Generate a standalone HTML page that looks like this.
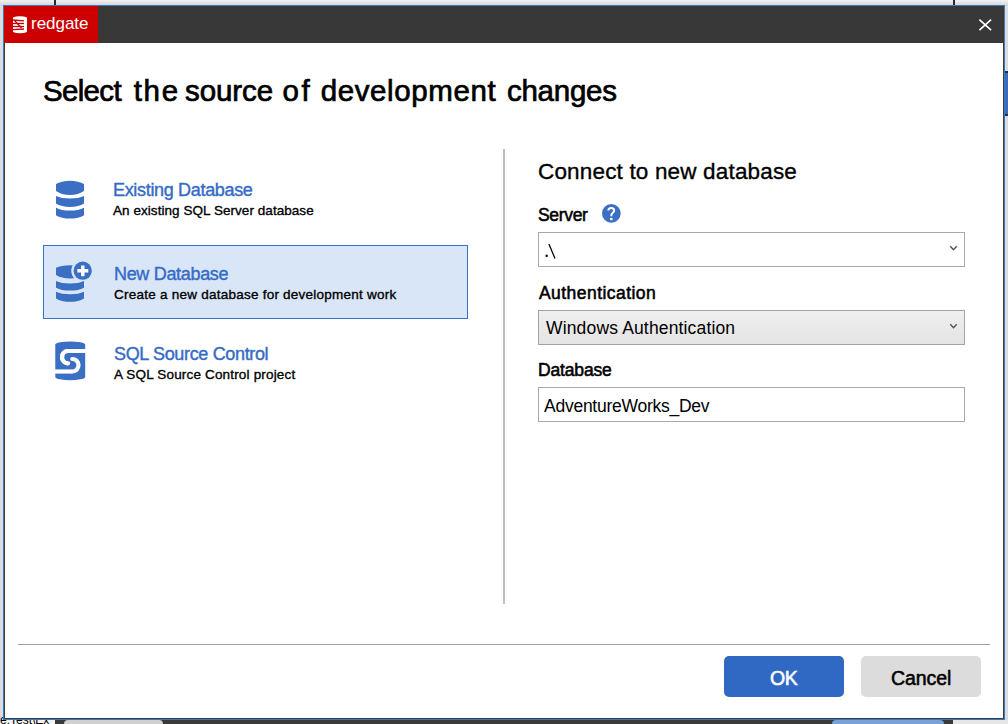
<!DOCTYPE html>
<html><head><meta charset="utf-8">
<style>
*{margin:0;padding:0;box-sizing:border-box}
html,body{width:1008px;height:724px;overflow:hidden;background:#dcdcdc;font-family:"Liberation Sans",sans-serif}
.a{position:absolute;white-space:nowrap}
.t{position:absolute;white-space:nowrap;line-height:1}
.box{position:absolute;border:1px solid #a9a9b0;background:#fff}
</style></head><body>
<div class="a" style="left:0;top:0;width:1008px;height:6px;background:linear-gradient(#f2f2f2,#d2d2d2)"></div>
<div class="a" style="left:54px;top:0;width:2px;height:5px;background:#2a2a2a"></div>
<div class="a" style="left:953px;top:0;width:2px;height:5px;background:#2a2a2a"></div>
<div class="a" style="left:1005px;top:71px;width:3px;height:45px;background:#3a6cb8;border-top:2px solid #1c3050;border-bottom:2px solid #1c3050"></div>
<div class="a" style="left:0;top:720px;width:1008px;height:4px;background:#3a3a3a"></div>
<div class="a" style="left:0;top:720px;width:55px;height:4px;background:#f4f4f4"></div>
<div class="t" style="left:0;top:714px;font-size:12px;color:#000">e:Test\Ex</div>
<div class="a" style="left:64px;top:720px;width:99px;height:4px;background:#d0d0d0;border-radius:4px 4px 0 0"></div>
<div class="a" style="left:832px;top:720px;width:112px;height:4px;background:#7aa2d8;border-radius:4px 4px 0 0"></div>
<div class="a" style="left:953px;top:720px;width:55px;height:4px;background:#e6e6e6"></div>
<div class="a" style="left:3px;top:5px;width:1002px;height:715px;border:1px solid #3a78c8;background:#fff"></div>
<div class="a" style="left:4px;top:6px;width:1000px;height:713px;border-left:1px solid #3c3c3c;border-right:1px solid #3c3c3c;border-bottom:1px solid #3c3c3c"></div>
<div class="a" style="left:4px;top:6px;width:1000px;height:37px;background:#383838"></div>
<div class="a" style="left:4px;top:6px;width:94px;height:37px;background:#cc0000"></div>
<!-- logo icon -->
<svg class="a" style="left:0;top:0" width="40" height="40" viewBox="0 0 40 40">
 <path d="M13.0,17.5 A8.75,3.12 0 0 1 27.0,17.5 L27.0,32.0 A8.75,3.12 0 0 1 13.0,32.0 Z" fill="#fff"/>
 <g stroke="#cc0000" stroke-width="1.3" fill="none">
  <path d="M13,20 L24,20.8"/><path d="M13,23.5 L24,23.5"/><path d="M13,26.5 L24,26.5"/><path d="M13,29.6 L24,29"/>
  <path d="M14.5,20.5 L21.5,28"/>
 </g>
</svg>
<!-- close X -->
<svg class="a" style="left:975px;top:15px" width="20" height="20" viewBox="0 0 20 20"><path d="M4.4 4.6L16.1 15.1M16.1 4.6L4.4 15.1" stroke="#fff" stroke-width="1.7" fill="none"/></svg>

<!-- left list selection -->
<div class="a" style="left:43px;top:245px;width:425px;height:74px;background:#d9e6f7;border:1px solid #3a70c8"></div>

<!-- icons -->
<svg class="a" style="left:0;top:0" width="100" height="400" viewBox="0 0 100 400">
 <defs><mask id="mk" maskUnits="userSpaceOnUse" x="0" y="0" width="100" height="400"><rect x="0" y="0" width="100" height="400" fill="#fff"/><circle cx="82.7" cy="270.7" r="11.4" fill="#000"/></mask></defs>
 <g fill="#3a6fc4">
  <path d="M56.0,184.1 A17.50,8.25 0 0 1 84.0,184.1 L84.0,191.1 A17.50,9.50 0 0 1 56.0,191.1 Z"/>
  <path d="M56.0,196.1 A17.50,6.25 0 0 0 84.0,196.1 L84.0,203.6 A17.50,8.25 0 0 1 56.0,203.6 Z"/>
  <path d="M56.0,207.7 A17.50,7.25 0 0 0 84.0,207.7 L84.0,215.2 A17.50,8.25 0 0 1 56.0,215.2 Z"/>
  <!-- new db -->
  <path d="M56.0,267.8 A17.50,6.25 0 0 1 84.0,267.8 L84.0,274.9 A17.50,9.25 0 0 1 56.0,274.9 Z" mask="url(#mk)"/>
  <path d="M56.0,281.1 A17.50,6.25 0 0 0 84.0,281.1 L84.0,287.7 A17.50,7.25 0 0 1 56.0,287.7 Z"/>
  <path d="M56.0,291.8 A17.50,6.25 0 0 0 84.0,291.8 L84.0,298.5 A17.50,8.25 0 0 1 56.0,298.5 Z"/>
  <circle cx="82.7" cy="270.7" r="9.1"/>
  <!-- sql source control -->
  <path d="M55.3,344.5 A15,3.3 0 0 1 85.2,344.5 L85.2,377.2 A15,3.3 0 0 1 55.3,377.2 Z"/>
 </g>
 <g stroke="#fff" fill="none" stroke-width="3.4">
  <path d="M77.3,270.7 H88.3 M82.8,265.4 V276.2"/>
 </g>
 <g stroke="#fff" fill="none" stroke-width="4.2" stroke-linecap="round">
  <path d="M88,351 H68.15 A6.15,6.15 0 0 0 68.15,363.3" stroke-linecap="butt"/>
  <path d="M68.15,351 A6.15,6.15 0 0 0 68.15,363.3"/>
  <path d="M72.25,359 A6.25,6.25 0 0 1 72.25,371.5"/>
  <path d="M72.25,371.5 H52" stroke-linecap="butt"/>
 </g>
</svg>

<!-- divider -->
<div class="a" style="left:503px;top:149px;width:2px;height:455px;background:#c0c0c0"></div>

<!-- right -->
<svg class="a" style="left:590px;top:195px" width="40" height="40" viewBox="590 195 40 40">
 <circle cx="611.35" cy="213.4" r="9.3" fill="#3a6fc4"/>
 <path d="M608.4,210.6 C608.4,208.6 609.7,207.9 611.2,207.9 C613,207.9 614.2,209 614.2,210.5 C614.2,212.4 611.3,213 611.3,215.3 L611.3,216.3" stroke="#fff" stroke-width="2" fill="none"/>
 <rect x="610.1" y="217.9" width="2.4" height="2.3" fill="#fff"/>
</svg>
<div class="box" style="left:538px;top:232px;width:427px;height:35px"></div>
<div class="box" style="left:538px;top:310px;width:427px;height:35px;border-color:#a3a3a3;background:linear-gradient(#efefef,#e4e4e4)"></div>
<div class="box" style="left:538px;top:387px;width:427px;height:35px"></div>
<svg class="a" style="left:940px;top:240px" width="20" height="20" viewBox="0 0 20 20"><path d="M10.3,6.3 L13.5,9.7 L16.7,6.3" stroke="#505050" stroke-width="1.35" fill="none"/></svg>
<svg class="a" style="left:940px;top:318px" width="20" height="20" viewBox="0 0 20 20"><path d="M10.3,6.3 L13.5,9.7 L16.7,6.3" stroke="#505050" stroke-width="1.35" fill="none"/></svg>

<svg class="a" style="left:540px;top:240px" width="20" height="22" viewBox="540 240 20 22">
 <rect x="545.6" y="254.7" width="2.1" height="2.2" fill="#000"/>
 <path d="M548.9,244.1 L555,258.6" stroke="#000" stroke-width="1.25" fill="none"/>
</svg>
<!-- separator -->
<div class="a" style="left:18px;top:644px;width:972px;height:1px;background:#a0a0a0"></div>
<!-- buttons -->
<div class="a" style="left:724px;top:656px;width:120px;height:41px;background:#3069c4;border-radius:5px"></div>
<div class="a" style="left:861px;top:656px;width:120px;height:41px;background:#dcdcdc;border-radius:5px"></div>
<div class="t" id="h1_0" style="left:43.00px;top:76.00px;font-size:29.5px;letter-spacing:-0.680px;color:#000;-webkit-text-stroke:0.7px #000;">Select</div>
<div class="t" id="h1_1" style="left:133.75px;top:76.00px;font-size:29.5px;letter-spacing:1.650px;color:#000;-webkit-text-stroke:0.7px #000;">the</div>
<div class="t" id="h1_2" style="left:185.00px;top:76.00px;font-size:29.5px;letter-spacing:-0.080px;color:#000;-webkit-text-stroke:0.7px #000;">source</div>
<div class="t" id="h1_3" style="left:282.60px;top:76.00px;font-size:29.5px;letter-spacing:2.600px;color:#000;-webkit-text-stroke:0.7px #000;">of</div>
<div class="t" id="h1_4" style="left:320.70px;top:76.00px;font-size:29.5px;letter-spacing:0.600px;color:#000;-webkit-text-stroke:0.7px #000;">development</div>
<div class="t" id="h1_5" style="left:506.90px;top:76.00px;font-size:29.5px;letter-spacing:-0.233px;color:#000;-webkit-text-stroke:0.7px #000;">changes</div>
<div class="t" id="e1" style="left:113.00px;top:181.00px;font-size:18px;letter-spacing:-0.325px;color:#356bc6;-webkit-text-stroke:0.4px #356bc6;">Existing Database</div>
<div class="t" id="e2" style="left:113.00px;top:204.00px;font-size:13.5px;letter-spacing:0.052px;color:#000;-webkit-text-stroke:0.35px #000;">An existing SQL Server database</div>
<div class="t" id="n1" style="left:114.00px;top:265.00px;font-size:18px;letter-spacing:-0.318px;color:#356bc6;-webkit-text-stroke:0.4px #356bc6;">New Database</div>
<div class="t" id="n2" style="left:114.00px;top:288.00px;font-size:13.5px;letter-spacing:0.241px;color:#000;-webkit-text-stroke:0.35px #000;">Create a new database for development work</div>
<div class="t" id="s1" style="left:114.00px;top:345.00px;font-size:18px;letter-spacing:-0.341px;color:#356bc6;-webkit-text-stroke:0.4px #356bc6;">SQL Source Control</div>
<div class="t" id="s2" style="left:114.00px;top:368.00px;font-size:13.5px;letter-spacing:0.170px;color:#000;-webkit-text-stroke:0.35px #000;">A SQL Source Control project</div>
<div class="t" id="c1" style="left:538.00px;top:161.00px;font-size:22.5px;letter-spacing:0.168px;color:#000;-webkit-text-stroke:0.35px #000;">Connect to new database</div>
<div class="t" id="l1" style="left:538.00px;top:207.00px;font-size:17.5px;letter-spacing:-0.320px;color:#000;-webkit-text-stroke:0.55px #000;">Server</div>
<div class="t" id="l2" style="left:539.00px;top:285.00px;font-size:17.5px;letter-spacing:0.446px;color:#000;-webkit-text-stroke:0.55px #000;">Authentication</div>
<div class="t" id="wa" style="left:546.00px;top:320.00px;font-size:17.5px;letter-spacing:0.157px;color:#000;">Windows Authentication</div>
<div class="t" id="l3" style="left:538.00px;top:362.00px;font-size:17.5px;letter-spacing:-0.157px;color:#000;-webkit-text-stroke:0.55px #000;">Database</div>
<div class="t" id="aw" style="left:544.00px;top:398.00px;font-size:17.5px;letter-spacing:-0.253px;color:#000;">AdventureWorks_Dev</div>
<div class="t" id="ok" style="left:770.00px;top:669.00px;font-size:19.5px;letter-spacing:-0.300px;color:#fff;-webkit-text-stroke:0.55px #fff;">OK</div>
<div class="t" id="cc" style="left:891.00px;top:669.00px;font-size:19.5px;letter-spacing:-0.060px;color:#000;-webkit-text-stroke:0.55px #000;">Cancel</div>
<div class="t" id="rg" style="left:31.00px;top:15.00px;font-size:17px;letter-spacing:-0.033px;color:#fff;">redgate</div>
</body></html>
